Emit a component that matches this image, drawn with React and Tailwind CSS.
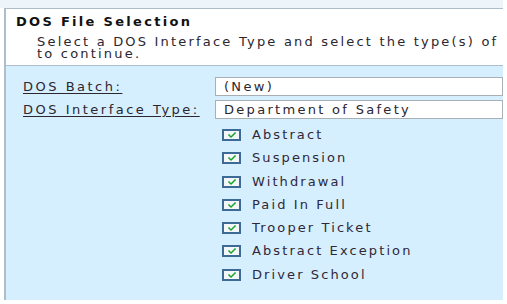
import { FaCheck } from "react-icons/fa";

const types = [
  "Abstract",
  "Suspension",
  "Withdrawal",
  "Paid In Full",
  "Trooper Ticket",
  "Abstract Exception",
  "Driver School",
];

const CheckRow = ({ label }) => (
  <div className="flex h-[23.3px] items-start">
    <span className="flex h-[12px] w-[19px] items-center justify-center border-2 border-[#3e6a96] bg-[#f4f7fa]">
      <FaCheck className="text-[8px] text-[#1ea32a]" />
    </span>
    <span className="ml-[11px] -mt-[1px] text-[13px] leading-[14px] tracking-[2.1px] text-[#302838]">
      {label}
    </span>
  </div>
);

const App = () => {
  return (
    <div className="h-[304px] w-[507px] overflow-hidden bg-white font-['DejaVu_Sans',Verdana,sans-serif]">
      <div className="h-[8px] w-[503px] bg-[#eef5fa]" />
      <div className="ml-[4px] w-[499px] border-l-2 border-t border-[#aebdca]">
        {/* header */}
        <div className="h-[57px] overflow-hidden border-b border-[#aebdca] bg-white pl-[10px] pt-[6px]">
          <div className="whitespace-nowrap text-[13px] font-bold leading-[14px] tracking-[2.3px] text-[#111]">
            DOS File Selection
          </div>
          <div className="ml-[21px] mt-[7px] whitespace-nowrap text-[13px] leading-[12px] tracking-[2.2px] text-[#2b2630]">
            <div>Select a DOS Interface Type and select the type(s) of</div>
            <div>to continue.</div>
          </div>
        </div>

        {/* body */}
        <div className="h-[234px] overflow-hidden bg-[#d5efff] pt-[11px]">
          <div className="flex h-[19px] items-center">
            <span className="w-[209px] pl-[17px] text-[13px] tracking-[2.5px] text-[#2b2630] underline underline-offset-2">
              DOS Batch:
            </span>
            <div className="flex h-[19px] flex-1 items-center border border-[#a8b0b6] bg-white pl-[8px] text-[13px] tracking-[2.3px] text-[#2b2630]">
              (New)
            </div>
          </div>
          <div className="mt-[4px] flex h-[19px] items-center">
            <span className="w-[209px] whitespace-nowrap pl-[17px] text-[13px] tracking-[2.5px] text-[#2b2630] underline underline-offset-2">
              DOS Interface Type:
            </span>
            <div className="flex h-[19px] flex-1 items-center border border-[#a8b0b6] bg-white pl-[8px] text-[13px] tracking-[2.3px] text-[#2b2630]">
              Department of Safety
            </div>
          </div>
          <div className="ml-[216px] mt-[10px]">
            {types.map((t) => (
              <CheckRow key={t} label={t} />
            ))}
          </div>
        </div>
      </div>
    </div>
  );
};

export default App;
